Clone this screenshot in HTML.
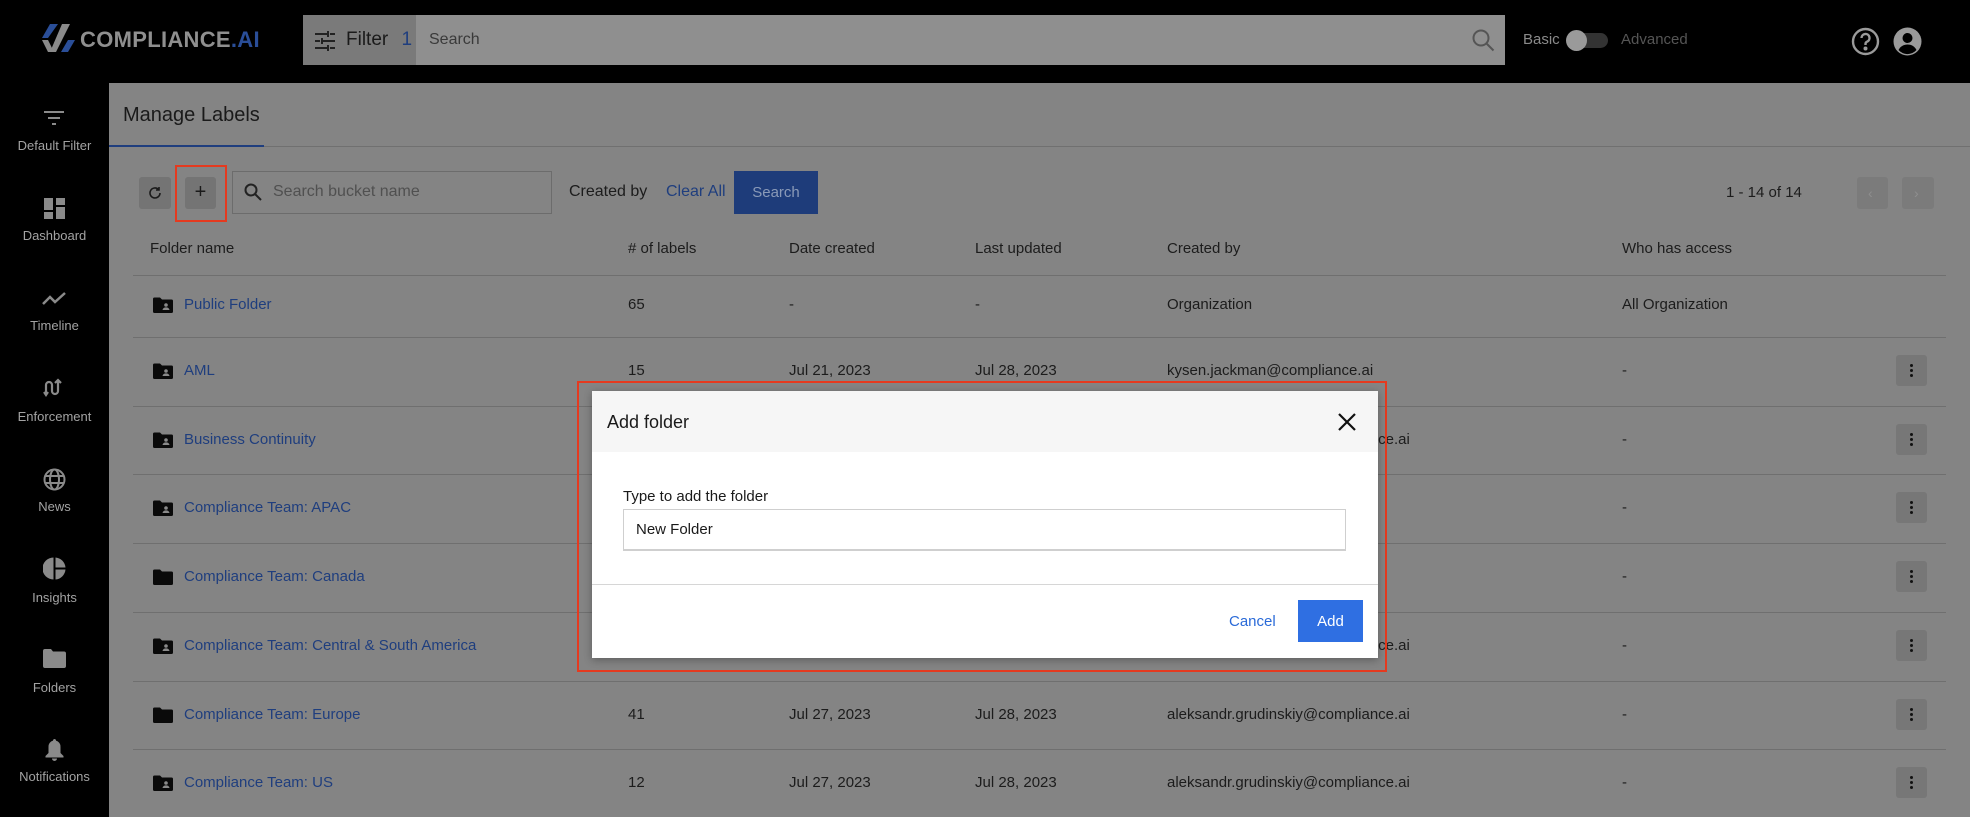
<!DOCTYPE html>
<html><head><meta charset="utf-8"><style>
*{margin:0;padding:0;box-sizing:border-box}
body{width:1970px;height:817px;overflow:hidden;background:#848484;font-family:"Liberation Sans",sans-serif;position:relative;color:#1c1c1c}
.a{position:absolute}
.t{position:absolute;font-size:15px;white-space:nowrap;line-height:18px}
.lnk{color:#1f3e7e}
.sep{position:absolute;left:133px;width:1813px;height:1px;background:#6f6f6f}
.sb{position:absolute;left:0;width:109px;text-align:center;font-size:13px;color:#a3a3a3}
.keb{position:absolute;left:1896px;width:31px;height:31px;background:#777;border-radius:3px}
.keb i{position:absolute;left:14px;width:3px;height:3px;border-radius:50%;background:#111}
</style></head><body>
<!-- header -->
<div class="a" style="left:0;top:0;width:1970px;height:83px;background:#000"></div>
<svg class="a" style="left:40px;top:22px" width="36" height="32" viewBox="0 0 36 32">
<polygon points="10,2 18,2 8,16 2,16" fill="#2a4e98"/>
<polygon points="2,18 8,18 14,30 8,30" fill="#8a8a8a"/>
<polygon points="22,2 30,2 16,30 10,30" fill="#8a8a8a"/>
<polygon points="28,18 35,18 28,30 21,30" fill="#2a4e98"/>
</svg>
<div class="t" style="left:80px;top:27px;font-size:22px;line-height:26px;font-weight:bold;color:#8f8f8f;letter-spacing:0.3px">COMPLIANCE<span style="color:#2a4e98">.AI</span></div>
<div class="a" style="left:303px;top:15px;width:1202px;height:50px;background:#8f8f8f"></div>
<div class="a" style="left:303px;top:15px;width:113px;height:50px;background:#7a7a7a"></div>
<svg class="a" style="left:314px;top:31px" width="22" height="20" viewBox="0 0 22 20" stroke="#222" stroke-width="2">
<path d="M1 3h12M16 3h5M14 0v6M1 10h5M9 10h12M8 7v6M1 17h12M16 17h5M14 14v6"/></svg>
<div class="t" style="left:346px;top:29px;font-size:19px;line-height:22px;color:#1a1a1a">Filter <span style="color:#1f3e7e;margin-left:8px">1</span></div>
<div class="t" style="left:429px;top:31px;font-size:16px;color:#3a3a3a">Search</div>
<svg class="a" style="left:1471px;top:28px" width="24" height="24" viewBox="0 0 24 24" fill="none" stroke="#555" stroke-width="2"><circle cx="10" cy="10" r="7.5"/><path d="M15.5 15.5l7 7"/></svg>
<div class="t" style="left:1523px;top:31px;font-size:15px;color:#8a8a8a">Basic</div>
<div class="a" style="left:1568px;top:33px;width:40px;height:15px;border-radius:8px;background:#333"></div>
<div class="a" style="left:1566px;top:30px;width:21px;height:21px;border-radius:50%;background:#9a9a9a"></div>
<div class="t" style="left:1621px;top:31px;font-size:15px;color:#555">Advanced</div>
<svg class="a" style="left:1851px;top:27px" width="29" height="29" viewBox="0 0 29 29" fill="none" stroke="#9a9a9a" stroke-width="2.4"><circle cx="14.5" cy="14.5" r="12.5"/><path d="M10.5 11a4 4 0 1 1 5.5 3.7c-1 .5-1.5 1.2-1.5 2.3v1" /><circle cx="14.5" cy="21.5" r="0.8" fill="#9a9a9a"/></svg>
<svg class="a" style="left:1893px;top:27px" width="29" height="29" viewBox="0 0 29 29"><circle cx="14.5" cy="14.5" r="14" fill="#9a9a9a"/><circle cx="14.5" cy="11" r="5" fill="#000"/><path d="M5.5 23c2-4 5.5-5.5 9-5.5s7 1.5 9 5.5a12 12 0 0 1-18 0z" fill="#000"/></svg>

<!-- sidebar -->
<div class="a" style="left:0;top:83px;width:109px;height:734px;background:#000"></div>
<svg class="a" style="left:43px;top:110px" width="22" height="16" viewBox="0 0 22 16" stroke="#8a8a8a" stroke-width="2"><path d="M1 2h20M5 8h12M9 14h4"/></svg>
<div class="sb" style="top:138px">Default Filter</div>
<svg class="a" style="left:44px;top:198px" width="21" height="21" viewBox="0 0 21 21" fill="#8a8a8a"><rect x="0" y="0" width="9" height="12"/><rect x="12" y="0" width="9" height="7"/><rect x="0" y="14" width="9" height="7"/><rect x="12" y="9" width="9" height="12"/></svg>
<div class="sb" style="top:228px">Dashboard</div>
<svg class="a" style="left:42px;top:292px" width="25" height="14" viewBox="0 0 25 14" fill="none" stroke="#8a8a8a" stroke-width="2.5"><path d="M1 12l7-7 5 5 10-9"/></svg>
<div class="sb" style="top:318px">Timeline</div>
<svg class="a" style="left:43px;top:377px" width="22" height="22" viewBox="0 0 22 22" fill="none" stroke="#8a8a8a" stroke-width="2.2"><path d="M3 17V8a3 3 0 0 1 6 0v6a3 3 0 0 0 6 0V3M12 6l3-3 3 3M1 15l2 3 2-3"/></svg>
<div class="sb" style="top:409px">Enforcement</div>
<svg class="a" style="left:43px;top:468px" width="23" height="23" viewBox="0 0 23 23" fill="none" stroke="#8a8a8a" stroke-width="2"><circle cx="11.5" cy="11.5" r="10"/><ellipse cx="11.5" cy="11.5" rx="4.5" ry="10"/><path d="M1.5 8h20M1.5 15h20"/></svg>
<div class="sb" style="top:499px">News</div>
<svg class="a" style="left:43px;top:557px" width="23" height="23" viewBox="0 0 23 23" fill="#8a8a8a"><path d="M10.5 0.5v22a11 11 0 0 1 0-22z"/><path d="M12.5 0.5a11 11 0 0 1 10 10h-10z"/><path d="M12.5 12.5h10a11 11 0 0 1-10 10z"/></svg>
<div class="sb" style="top:590px">Insights</div>
<svg class="a" style="left:43px;top:649px" width="23" height="19" viewBox="0 0 23 19" fill="#8a8a8a"><path d="M0 2a2 2 0 0 1 2-2h6l2 2.5h11a2 2 0 0 1 2 2V17a2 2 0 0 1-2 2H2a2 2 0 0 1-2-2z"/></svg>
<div class="sb" style="top:680px">Folders</div>
<svg class="a" style="left:45px;top:739px" width="19" height="22" viewBox="0 0 19 22" fill="#8a8a8a"><path d="M9.5 0c1 0 1.5.8 1.5 1.6A6 6 0 0 1 15.5 8v6l3 3v1.5H.5V17l3-3V8A6 6 0 0 1 8 1.6C8 .8 8.5 0 9.5 0zM7 19.5h5a2.5 2.5 0 0 1-5 0z"/></svg>
<div class="sb" style="top:769px">Notifications</div>

<!-- content -->
<div class="t" style="left:123px;top:103px;font-size:20px;line-height:24px;color:#1a1a1a">Manage Labels</div>
<div class="a" style="left:109px;top:146px;width:1861px;height:1px;background:#707070"></div>
<div class="a" style="left:109px;top:145px;width:155px;height:2px;background:#1f3e7e"></div>

<div class="a" style="left:139px;top:177px;width:32px;height:32px;background:#747474;border-radius:3px"></div>
<svg class="a" style="left:148px;top:186px" width="14" height="14" viewBox="0 0 14 14" fill="none" stroke="#1a1a1a" stroke-width="1.6"><path d="M12 7a5 5 0 1 1-1.5-3.6"/><path d="M11 1v3h-3" /></svg>
<div class="a" style="left:185px;top:177px;width:31px;height:32px;background:#747474;border-radius:3px"></div>
<div class="t" style="left:185px;top:182px;width:31px;text-align:center;font-size:20px;line-height:20px;color:#1a1a1a">+</div>
<div class="a" style="left:175px;top:165px;width:52px;height:57px;border:2px solid #e53a1f"></div>
<div class="a" style="left:232px;top:171px;width:320px;height:43px;border:1px solid #6c6c6c"></div>
<svg class="a" style="left:244px;top:183px" width="18" height="18" viewBox="0 0 18 18" fill="none" stroke="#222" stroke-width="2"><circle cx="7" cy="7" r="5.5"/><path d="M11 11l6 6"/></svg>
<div class="t" style="left:273px;top:183px;font-size:16px;color:#505050">Search bucket name</div>
<div class="t" style="left:569px;top:183px;font-size:16px">Created by</div>
<div class="t lnk" style="left:666px;top:183px;font-size:16px">Clear All</div>
<div class="a" style="left:734px;top:171px;width:84px;height:43px;background:#1e3c7a"></div>
<div class="t" style="left:734px;top:184px;width:84px;text-align:center;font-size:15px;color:#8a9ab8">Search</div>
<div class="t" style="left:1726px;top:184px;font-size:15px">1 - 14 of 14</div>
<div class="a" style="left:1857px;top:177px;width:31px;height:32px;background:#7b7b7b;border-radius:3px"></div>
<div class="a" style="left:1902px;top:177px;width:32px;height:32px;background:#7b7b7b;border-radius:3px"></div>
<div class="t" style="left:1868px;top:184px;font-size:14px;color:#8f8f8f">‹</div>
<div class="t" style="left:1914px;top:184px;font-size:14px;color:#8f8f8f">›</div>

<div class="t" style="left:150px;top:240px">Folder name</div>
<div class="t" style="left:628px;top:240px"># of labels</div>
<div class="t" style="left:789px;top:240px">Date created</div>
<div class="t" style="left:975px;top:240px">Last updated</div>
<div class="t" style="left:1167px;top:240px">Created by</div>
<div class="t" style="left:1622px;top:240px">Who has access</div>

<div class="sep" style="top:275px"></div>
<div class="sep" style="top:337px"></div>
<div class="sep" style="top:406px"></div>
<div class="sep" style="top:474px"></div>
<div class="sep" style="top:543px"></div>
<div class="sep" style="top:612px"></div>
<div class="sep" style="top:681px"></div>
<div class="sep" style="top:749px"></div>

<svg width="0" height="0" style="position:absolute"><defs>
<symbol id="fp" viewBox="0 0 20 16"><path d="M0 2a1.5 1.5 0 0 1 1.5-1.5h5.5l2 2h9.5A1.5 1.5 0 0 1 20 4v10.5a1.5 1.5 0 0 1-1.5 1.5h-17A1.5 1.5 0 0 1 0 14.5z" fill="#0a0a0a"/><circle cx="13" cy="8" r="1.8" fill="#8a8a8a"/><path d="M9.5 13c.5-2 2-2.6 3.5-2.6s3 .6 3.5 2.6z" fill="#8a8a8a"/></symbol>
<symbol id="fo" viewBox="0 0 20 16"><path d="M0 2a1.5 1.5 0 0 1 1.5-1.5h5.5l2 2h9.5A1.5 1.5 0 0 1 20 4v10.5a1.5 1.5 0 0 1-1.5 1.5h-17A1.5 1.5 0 0 1 0 14.5z" fill="#0a0a0a"/></symbol>
</defs></svg>

<!-- rows -->
<svg class="a" style="left:153px;top:297px" width="20" height="16"><use href="#fp"/></svg>
<div class="t lnk" style="left:184px;top:296px">Public Folder</div>
<div class="t" style="left:628px;top:296px">65</div><div class="t" style="left:789px;top:296px">-</div><div class="t" style="left:975px;top:296px">-</div>
<div class="t" style="left:1167px;top:296px">Organization</div><div class="t" style="left:1622px;top:296px">All Organization</div>

<svg class="a" style="left:153px;top:363px" width="20" height="16"><use href="#fp"/></svg>
<div class="t lnk" style="left:184px;top:362px">AML</div>
<div class="t" style="left:628px;top:362px">15</div><div class="t" style="left:789px;top:362px">Jul 21, 2023</div><div class="t" style="left:975px;top:362px">Jul 28, 2023</div>
<div class="t" style="left:1167px;top:362px">kysen.jackman@compliance.ai</div><div class="t" style="left:1622px;top:362px">-</div>
<div class="keb" style="top:355px"><i style="top:9px"></i><i style="top:14px"></i><i style="top:19px"></i></div>

<svg class="a" style="left:153px;top:432px" width="20" height="16"><use href="#fp"/></svg>
<div class="t lnk" style="left:184px;top:431px">Business Continuity</div>
<div class="t" style="left:1167px;top:431px">aleksandr.grudinskiy@compliance.ai</div><div class="t" style="left:1622px;top:431px">-</div>
<div class="keb" style="top:424px"><i style="top:9px"></i><i style="top:14px"></i><i style="top:19px"></i></div>

<svg class="a" style="left:153px;top:500px" width="20" height="16"><use href="#fp"/></svg>
<div class="t lnk" style="left:184px;top:499px">Compliance Team: APAC</div>
<div class="t" style="left:1622px;top:499px">-</div>
<div class="keb" style="top:492px"><i style="top:9px"></i><i style="top:14px"></i><i style="top:19px"></i></div>

<svg class="a" style="left:153px;top:569px" width="20" height="16"><use href="#fo"/></svg>
<div class="t lnk" style="left:184px;top:568px">Compliance Team: Canada</div>
<div class="t" style="left:1622px;top:568px">-</div>
<div class="keb" style="top:561px"><i style="top:9px"></i><i style="top:14px"></i><i style="top:19px"></i></div>

<svg class="a" style="left:153px;top:638px" width="20" height="16"><use href="#fp"/></svg>
<div class="t lnk" style="left:184px;top:637px">Compliance Team: Central &amp; South America</div>
<div class="t" style="left:1167px;top:637px">aleksandr.grudinskiy@compliance.ai</div><div class="t" style="left:1622px;top:637px">-</div>
<div class="keb" style="top:630px"><i style="top:9px"></i><i style="top:14px"></i><i style="top:19px"></i></div>

<svg class="a" style="left:153px;top:707px" width="20" height="16"><use href="#fo"/></svg>
<div class="t lnk" style="left:184px;top:706px">Compliance Team: Europe</div>
<div class="t" style="left:628px;top:706px">41</div><div class="t" style="left:789px;top:706px">Jul 27, 2023</div><div class="t" style="left:975px;top:706px">Jul 28, 2023</div>
<div class="t" style="left:1167px;top:706px">aleksandr.grudinskiy@compliance.ai</div><div class="t" style="left:1622px;top:706px">-</div>
<div class="keb" style="top:699px"><i style="top:9px"></i><i style="top:14px"></i><i style="top:19px"></i></div>

<svg class="a" style="left:153px;top:775px" width="20" height="16"><use href="#fp"/></svg>
<div class="t lnk" style="left:184px;top:774px">Compliance Team: US</div>
<div class="t" style="left:628px;top:774px">12</div><div class="t" style="left:789px;top:774px">Jul 27, 2023</div><div class="t" style="left:975px;top:774px">Jul 28, 2023</div>
<div class="t" style="left:1167px;top:774px">aleksandr.grudinskiy@compliance.ai</div><div class="t" style="left:1622px;top:774px">-</div>
<div class="keb" style="top:767px"><i style="top:9px"></i><i style="top:14px"></i><i style="top:19px"></i></div>

<!-- modal -->
<div class="a" style="left:577px;top:381px;width:810px;height:291px;border:2px solid #e53a1f"></div>
<div class="a" style="left:592px;top:391px;width:786px;height:267px;background:#fff;box-shadow:0 2px 8px rgba(0,0,0,.3)"></div>
<div class="a" style="left:592px;top:391px;width:786px;height:61px;background:#f6f6f6"></div>
<div class="t" style="left:607px;top:411px;font-size:18px;line-height:22px;color:#1a1a1a">Add folder</div>
<svg class="a" style="left:1337px;top:412px" width="20" height="20" viewBox="0 0 20 20" stroke="#111" stroke-width="2.2"><path d="M2 2l16 16M18 2L2 18"/></svg>
<div class="t" style="left:623px;top:488px;font-size:15px;color:#1a1a1a">Type to add the folder</div>
<div class="a" style="left:623px;top:509px;width:723px;height:42px;border:1px solid #cfcfcf;border-bottom-width:2px"></div>
<div class="t" style="left:636px;top:521px;font-size:15px;color:#1a1a1a">New Folder</div>
<div class="a" style="left:592px;top:584px;width:786px;height:1px;background:#d6d6d6"></div>
<div class="t" style="left:1229px;top:613px;font-size:15px;color:#2a6ad8">Cancel</div>
<div class="a" style="left:1298px;top:600px;width:65px;height:42px;background:#2f6fe2"></div>
<div class="t" style="left:1298px;top:613px;width:65px;text-align:center;font-size:15px;color:#fff">Add</div>
</body></html>
